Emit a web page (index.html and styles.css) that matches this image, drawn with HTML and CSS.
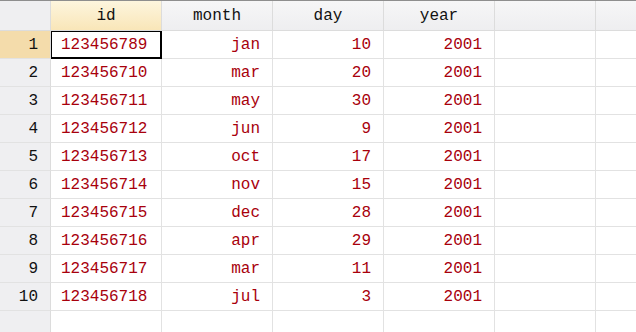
FILE: index.html
```html
<!DOCTYPE html>
<html>
<head>
<meta charset="utf-8">
<link rel="stylesheet" href="styles.css">
</head>
<body>
<div class="sheet">
  <div class="grid">
    <div class="cell corner"></div>
    <div class="cell colhead active-col">id</div>
    <div class="cell colhead">month</div>
    <div class="cell colhead">day</div>
    <div class="cell colhead">year</div>
    <div class="cell colhead"></div>
    <div class="cell colhead last"></div>

    <div class="cell rowhead active-row">1</div>
    <div class="cell val left selected">123456789</div>
    <div class="cell val">jan</div>
    <div class="cell val">10</div>
    <div class="cell val">2001</div>
    <div class="cell"></div>
    <div class="cell last"></div>

    <div class="cell rowhead">2</div>
    <div class="cell val left">123456710</div>
    <div class="cell val">mar</div>
    <div class="cell val">20</div>
    <div class="cell val">2001</div>
    <div class="cell"></div>
    <div class="cell last"></div>

    <div class="cell rowhead">3</div>
    <div class="cell val left">123456711</div>
    <div class="cell val">may</div>
    <div class="cell val">30</div>
    <div class="cell val">2001</div>
    <div class="cell"></div>
    <div class="cell last"></div>

    <div class="cell rowhead">4</div>
    <div class="cell val left">123456712</div>
    <div class="cell val">jun</div>
    <div class="cell val">9</div>
    <div class="cell val">2001</div>
    <div class="cell"></div>
    <div class="cell last"></div>

    <div class="cell rowhead">5</div>
    <div class="cell val left">123456713</div>
    <div class="cell val">oct</div>
    <div class="cell val">17</div>
    <div class="cell val">2001</div>
    <div class="cell"></div>
    <div class="cell last"></div>

    <div class="cell rowhead">6</div>
    <div class="cell val left">123456714</div>
    <div class="cell val">nov</div>
    <div class="cell val">15</div>
    <div class="cell val">2001</div>
    <div class="cell"></div>
    <div class="cell last"></div>

    <div class="cell rowhead">7</div>
    <div class="cell val left">123456715</div>
    <div class="cell val">dec</div>
    <div class="cell val">28</div>
    <div class="cell val">2001</div>
    <div class="cell"></div>
    <div class="cell last"></div>

    <div class="cell rowhead">8</div>
    <div class="cell val left">123456716</div>
    <div class="cell val">apr</div>
    <div class="cell val">29</div>
    <div class="cell val">2001</div>
    <div class="cell"></div>
    <div class="cell last"></div>

    <div class="cell rowhead">9</div>
    <div class="cell val left">123456717</div>
    <div class="cell val">mar</div>
    <div class="cell val">11</div>
    <div class="cell val">2001</div>
    <div class="cell"></div>
    <div class="cell last"></div>

    <div class="cell rowhead">10</div>
    <div class="cell val left">123456718</div>
    <div class="cell val">jul</div>
    <div class="cell val">3</div>
    <div class="cell val">2001</div>
    <div class="cell"></div>
    <div class="cell last"></div>

    <div class="cell rowhead filler"></div>
    <div class="cell filler"></div>
    <div class="cell filler"></div>
    <div class="cell filler"></div>
    <div class="cell filler"></div>
    <div class="cell filler"></div>
    <div class="cell filler last"></div>
  </div>
</div>
</body>
</html>
```

FILE: styles.css
```css
html, body {
  margin: 0;
  padding: 0;
  background: #ffffff;
}

.sheet {
  width: 636px;
  height: 332px;
  overflow: hidden;
  border-top: 1px solid #8e8e8e;
  box-sizing: border-box;
  font-family: "Liberation Mono", "Courier New", monospace;
  font-size: 16px;
}

.grid {
  display: grid;
  grid-template-columns: 51px 111px 111px 111px 111px 101px 1fr;
  grid-template-rows: 30px repeat(10, 28px) 40px;
}

.cell {
  box-sizing: border-box;
  border-right: 1px solid #e2e2e2;
  border-bottom: 1px solid #e2e2e2;
  display: flex;
  align-items: center;
  line-height: 1;
  white-space: nowrap;
}

.cell.last {
  border-right: none;
}

.corner {
  background: #efeff1;
  border-right-color: #dcdcdc;
  border-bottom-color: #dcdcdc;
}

.colhead {
  background: linear-gradient(#f6f6f7, #eeeef0);
  border-bottom-color: #dcdcdc;
  border-right-color: #dcdcdc;
  justify-content: center;
  color: #111;
}

.colhead.active-col {
  background: linear-gradient(#fdf5de, #f9e6b8);
}

.rowhead {
  background: #efeff1;
  border-right-color: #dcdcdc;
  justify-content: flex-end;
  padding-right: 12px;
  color: #111;
}

.rowhead.active-row {
  background: #f4dcab;
}

.val {
  color: #a8000c;
  justify-content: flex-end;
  padding-right: 12px;
}

.val.left {
  justify-content: flex-start;
  padding-left: 10px;
  padding-right: 0;
}

.selected {
  border-right-color: #000;
  border-bottom-color: #000;
  box-shadow: inset 1px 1px 0 #000, inset -1px -1px 0 #000;
}

.filler {
  border-bottom: none;
}
```
